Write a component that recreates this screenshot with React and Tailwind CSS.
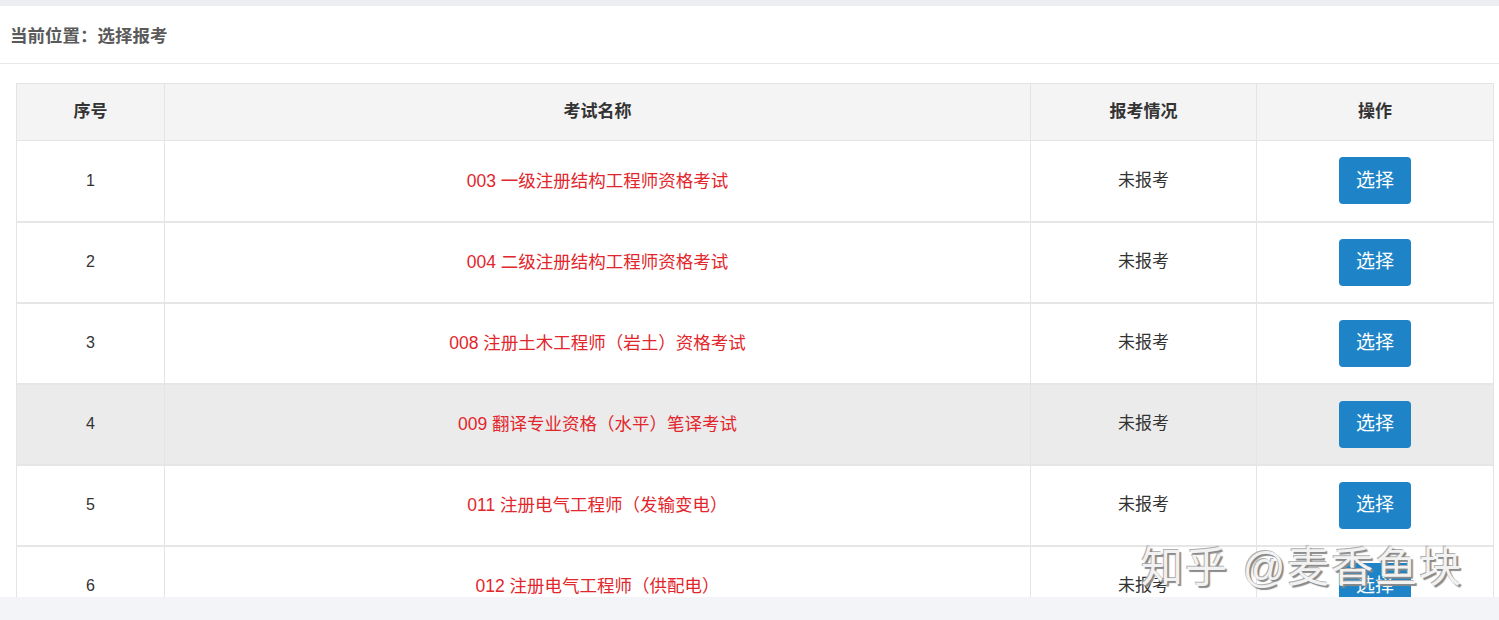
import React from "react";

const exams = [
  { id: 1, name: "003 一级注册结构工程师资格考试" },
  { id: 2, name: "004 二级注册结构工程师资格考试" },
  { id: 3, name: "008 注册土木工程师（岩土）资格考试" },
  { id: 4, name: "009 翻译专业资格（水平）笔译考试", hover: true },
  { id: 5, name: "011 注册电气工程师（发输变电）" },
  { id: 6, name: "012 注册电气工程师（供配电）" },
];

export default function App() {
  return (
    <div
      className="relative w-[1499px] h-[620px] overflow-hidden bg-white text-[#333]"
      style={{ fontFamily: '"Liberation Sans", "Noto Sans CJK SC", sans-serif' }}
    >
      <div className="h-[6px] bg-[#eceef1]" />
      <div className="h-[58px] border-b border-[#e8e8e8] flex items-center pl-[10px] pt-[4px]">
        <span className="text-[17.5px] font-bold text-[#5a5a5a]">当前位置：选择报考</span>
      </div>
      <div className="h-[533px] overflow-hidden pl-[16px] pr-[6px] pt-[19px]">
        <table className="w-full table-fixed border-collapse">
          <colgroup>
            <col className="w-[148px]" />
            <col className="w-[866px]" />
            <col className="w-[226px]" />
            <col className="w-[237px]" />
          </colgroup>
          <thead>
            <tr className="h-[57px] bg-[#f4f4f4]">
              {["序号", "考试名称", "报考情况", "操作"].map((h) => (
                <th
                  key={h}
                  className="border border-[#e4e4e4] text-[17px] font-bold text-[#333] text-center"
                >
                  {h}
                </th>
              ))}
            </tr>
          </thead>
          <tbody>
            {exams.map((e) => (
              <tr
                key={e.id}
                className={`h-[81px] border-b-2 border-[#e6e6e6] ${e.hover ? "bg-[#ebebeb]" : "bg-white"}`}
              >
                <td className="border-x border-[#e4e4e4] text-center text-[16px] text-[#333]">{e.id}</td>
                <td className="border-x border-[#e4e4e4] text-center text-[17.5px] text-[#e2262c]">{e.name}</td>
                <td className="border-x border-[#e4e4e4] text-center text-[17px] text-[#333]">未报考</td>
                <td className="border-x border-[#e4e4e4] text-center">
                  <button
                    type="button"
                    className="w-[72px] h-[47px] rounded-[4px] bg-[#1e84c7] text-white text-[19px]"
                  >
                    选择
                  </button>
                </td>
              </tr>
            ))}
          </tbody>
        </table>
      </div>
      <div className="h-[23px] bg-[#f2f4f7]" />
      <div
        className="absolute left-[1141px] top-[536px] text-[42px] text-[#f2f2f2] tracking-[2px] pointer-events-none"
        style={{ textShadow: "2px 2px 1px #8a8a8a, -1px -1px 0 #b0b0b0" }}
      >
        知乎 @麦香鱼块
      </div>
    </div>
  );
}
